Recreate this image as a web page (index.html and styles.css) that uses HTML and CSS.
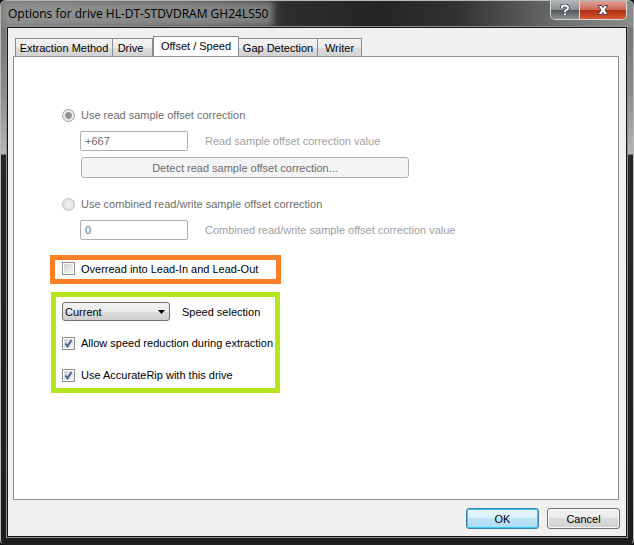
FILE: index.html
```
<!DOCTYPE html>
<html lang="en">
<head>
  <meta charset="UTF-8">
  <title>Options for drive HL-DT-STDVDRAM GH24LS50</title>
  <link rel="stylesheet" href="styles.css">
</head>
<body>
<main class="window">
  <!-- Title bar -->
  <header class="titlebar">
    <h1>Options for drive HL-DT-STDVDRAM GH24LS50</h1>
    <div class="window-buttons">
      <button type="button" class="help" aria-label="Help">
        <svg width="10" height="12" viewBox="0 0 10 12"><path d="M2 4V3Q2 1.500 5 1.500T8 4Q8 5 6.500 5.800Q5 6.500 5 8M5 9.500V11" fill="none" stroke="#444b55" stroke-width="3.800"/><path d="M2 4V3Q2 1.500 5 1.500T8 4Q8 5 6.500 5.800Q5 6.500 5 8M5 9.500V11" fill="none" stroke="#fff" stroke-width="2"/></svg>
      </button>
      <button type="button" class="close" aria-label="Close">
        <svg width="12" height="10" viewBox="0 0 12 10"><path d="M1 .5H4.500L6 2.500L7.500 .5H11L8 5L11 9.500H7.500L6 7.500L4.500 9.500H1L4 5Z" fill="#fff" stroke="#4b3a4c" stroke-width="1"/></svg>
      </button>
    </div>
  </header>

  <form class="client">
    <!-- Tabs -->
    <nav class="tabs">
      <button type="button" class="tab tab-method">Extraction Method</button>
      <button type="button" class="tab tab-drive">Drive</button>
      <button type="button" class="tab tab-offset active">Offset / Speed</button>
      <button type="button" class="tab tab-gap">Gap Detection</button>
      <button type="button" class="tab tab-writer">Writer</button>
    </nav>

    <section class="panel">
      <!-- Sample offset -->
      <div class="group disabled">
        <label class="option"><input type="radio" name="offset" checked disabled>Use read sample offset correction</label>
        <div class="field">
          <input type="text" id="read-offset" value="+667" disabled>
          <label for="read-offset">Read sample offset correction value</label>
        </div>
        <button type="button" class="detect" disabled>Detect read sample offset correction...</button>
      </div>
      <div class="group disabled">
        <label class="option"><input type="radio" name="offset" disabled>Use combined read/write sample offset correction</label>
        <div class="field">
          <input type="text" id="combined-offset" value="0" disabled>
          <label for="combined-offset">Combined read/write sample offset correction value</label>
        </div>
      </div>

      <!-- Overread -->
      <div class="box orange">
        <label class="option"><input type="checkbox">Overread into Lead-In and Lead-Out</label>
      </div>

      <!-- Speed -->
      <div class="box green">
        <div class="speed">
          <select id="speed"><option>Current</option></select>
          <label for="speed">Speed selection</label>
        </div>
        <label class="option"><input type="checkbox" checked>Allow speed reduction during extraction</label>
        <label class="option"><input type="checkbox" checked>Use AccurateRip with this drive</label>
      </div>
    </section>

    <footer class="actions">
      <button type="submit" class="ok">OK</button>
      <button type="button">Cancel</button>
    </footer>
  </form>
</main>
</body>
</html>
```
FILE: styles.css
```
* {
    box-sizing: border-box;
}
body {
    margin: 0;
    background: #111;
    font-family: "Liberation Sans", Arial, sans-serif;
    font-size: 11px;
    color: #000;
}
button, input, select {
    font: inherit;
    color: inherit;
    margin: 0;
}
.window {
    display: flex;
    flex-direction: column;
    min-height: 100vh;
    padding: 0 6px 7px;
    border: 1px solid #b5bab8;
    border-bottom-color: #222;
    border-radius: 6px 6px 5px 5px;
    background: linear-gradient(#6a6c6b, #8a8c8b 90px, #b5b5b5 153px, #262828 154px, #1c1e1e);
}

/* Title bar */
.titlebar {
    display: flex;
    justify-content: space-between;
    align-items: flex-start;
    height: 26px;
    margin: 0 -6px;
    padding: 0 6px;
    border-radius: 5px 5px 0 0;
    background: linear-gradient(90deg, #777978, #5c5e5d 200px, #424443 265px, #2c2e2e 285px, #242626 60%, #303232 72%, #727473 90%, #8a8c8b);
}
.titlebar h1 {
    margin: 6px 0 0 1px;
    background: rgba(160, 162, 161, .6);
    box-shadow: 0 0 6px 5px rgba(160, 162, 161, .6);
    font: 12px/14px "Open Sans", "Noto Sans", sans-serif;
    white-space: nowrap;
}
.window-buttons {
    display: flex;
    height: 19px;
    border: 1px solid #d5d7d7;
    border-top: 0;
    border-radius: 0 0 5px 5px;
    overflow: hidden;
}
.window-buttons button {
    display: flex;
    align-items: center;
    justify-content: center;
    padding: 0;
    border: 0;
}
.help {
    width: 28px;
    background: linear-gradient(#b2b5b6, #898d8f 50%, #505456 50%, #8b8f90);
}
.window-buttons .close {
    width: 47px;
    border-left: 1px solid #d5d7d7;
    background: linear-gradient(#e0a294, #cc6654 50%, #b02a10 50%, #d65a35);
}

/* Dialog body */
.client {
    flex: 1;
    display: flex;
    flex-direction: column;
    padding: 8px 7px 7px 5px;
    border: 1px solid #151515;
    outline: 1px solid #8d908f;
    background: #f0f0f0;
}
.tabs {
    display: flex;
    align-items: flex-end;
    height: 20px;
    padding-left: 2px;
}
.tab {
    height: 18px;
    padding: 0;
    border: 1px solid #898c95;
    border-bottom: 0;
    border-left-width: 0;
    background: linear-gradient(#f3f3f3, #ebebeb 50%, #dedede 50%, #d2d2d2);
    white-space: nowrap;
}
.tab-method {
    width: 98px;
    border-left-width: 1px;
}
.tab-drive {
    width: 40px;
    padding-right: 4px;
}
.tab-offset {
    width: 86px;
}
.tab-gap {
    width: 79px;
}
.tab-writer {
    width: 44px;
}
.tab.active {
    height: 21px;
    margin-bottom: -1px;
    padding-bottom: 3px;
    border-left-width: 1px;
    background: #fff;
}
.panel {
    flex: 1;
    padding: 48px 36px 20px;
    border: 1px solid #898c95;
    background: #fff;
}

/* Options */
.option {
    display: flex;
    align-items: center;
    gap: 6px;
    height: 20px;
    white-space: nowrap;
}
.group {
    padding-left: 12px;
    margin-bottom: 16px;
}
.group + .group {
    margin-bottom: 15px;
}
.disabled {
    color: #6d6d6d;
}
.field {
    display: flex;
    align-items: center;
    gap: 17px;
    margin: 6px 0 0 18px;
}
.field label {
    color: #a0a0a0;
}
.field input {
    width: 108px;
    height: 20px;
    padding: 0 4px;
    border: 1px solid #afafaf;
    border-radius: 2px;
    background: #fff;
}
.detect {
    width: 328px;
    height: 21px;
    margin: 6px 0 0 19px;
    border: 1px solid #adb2b5;
    border-radius: 3px;
    background: #f4f4f4;
}
input[type="radio"], input[type="checkbox"] {
    appearance: none;
    flex: none;
    width: 13px;
    height: 13px;
    border: 1px solid #8e8f8f;
    background: linear-gradient(135deg, #cbcfd5, #f6f6f6) content-box #f4f4f4;
    padding: 1px;
}
input[type="radio"] {
    border-color: #bcbcbc;
    border-radius: 50%;
    background: radial-gradient(#f0f0f0, #dedede);
}
input[type="radio"]:checked {
    border-color: #a4a4a4;
    background: radial-gradient(circle, #858585 0, #999 3px, #eee 4px, #ddd);
}
input[type="checkbox"]:checked {
    background-image: url("data:image/svg+xml,%3Csvg xmlns='http://www.w3.org/2000/svg' viewBox='0 0 9 9'%3E%3Cpath d='M1.500 4.500L3.500 7.500L7.500 1' fill='none' stroke='%23415a9c' stroke-width='1.800'/%3E%3C/svg%3E"), linear-gradient(135deg, #cbcfd5, #f6f6f6);
}

/* Highlighted options */
.box {
    border: 5px solid;
}
.orange {
    width: 231px;
    padding: 0 7px 2px;
    border-color: #ff7f27;
}
.orange .option {
    height: 17px;
}
.green {
    display: flex;
    flex-direction: column;
    gap: 12px;
    width: 229px;
    margin: 8px 0 0 1px;
    padding: 5px 6px 3px;
    border-color: #b5e61d;
}
.speed {
    display: flex;
    align-items: center;
    gap: 12px;
}
select {
    appearance: none;
    width: 108px;
    height: 19px;
    padding: 0 2px;
    border: 1px solid #707070;
    border-radius: 3px;
    background: url("data:image/svg+xml,%3Csvg xmlns='http://www.w3.org/2000/svg' width='7' height='4'%3E%3Cpath d='M0 0H7L3.500 4Z'/%3E%3C/svg%3E") no-repeat right 4px center, linear-gradient(#f2f2f2, #ebebeb 50%, #dddddd 50%, #cfcfcf);
}

/* Dialog buttons */
.actions {
    display: flex;
    justify-content: flex-end;
    gap: 8px;
    margin-right: -1px;
    padding-top: 8px;
}
.actions button {
    width: 73px;
    height: 21px;
    padding: 0;
    border: 1px solid #707070;
    border-radius: 3px;
    background: linear-gradient(#f2f2f2, #ebebeb 50%, #dddddd 50%, #cfcfcf);
    box-shadow: inset 0 0 0 1px #f8f8f8;
}
.actions .ok {
    border-color: #3c7fb1;
    background: linear-gradient(#e8f5fc, #d8effb 50%, #bde4f8 50%, #aadcf5);
    box-shadow: inset 0 0 0 1px #34c8f3;
}
```
